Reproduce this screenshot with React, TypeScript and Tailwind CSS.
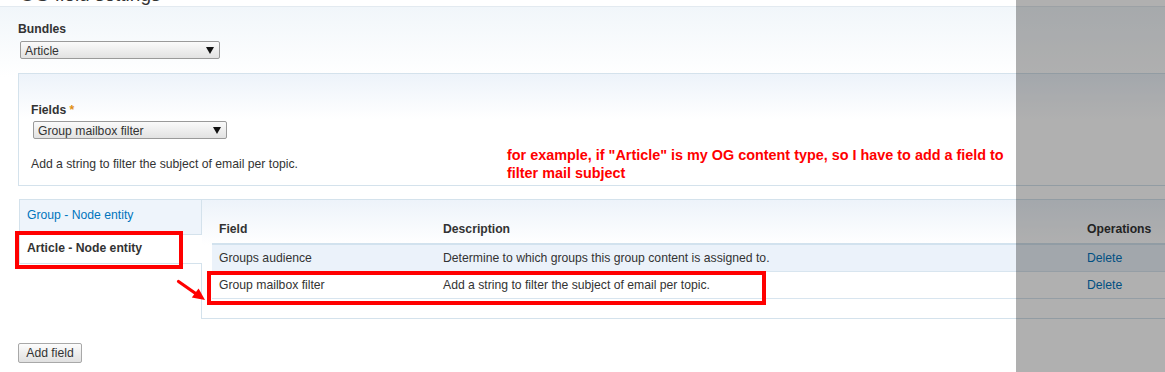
import React from "react";

function Caret() {
  return (
    <svg width="8" height="7" viewBox="0 0 8 7" className="shrink-0">
      <path d="M0 0 L8 0 L4 7 Z" fill="#111" />
    </svg>
  );
}

function Select({ value, className }: { value: string; className: string }) {
  return (
    <div
      className={
        "flex h-[18px] items-center justify-between rounded-[2px] border border-[#9a9a9a] bg-[linear-gradient(to_bottom,#fafafa,#e2e2e2)] pl-[4px] pr-[5px] pt-[1px] text-[12.2px] leading-[16px] text-[#333] " +
        className
      }
    >
      <span>{value}</span>
      <Caret />
    </div>
  );
}

export default function App() {
  return (
    <div className="relative h-[372px] w-[1165px] overflow-hidden bg-white font-['Liberation_Sans',Arial,sans-serif] text-[12.2px] leading-[15px] text-[#333]">
      <div className="w-[1220px]">
        <h1 className="-mt-[16px] h-[22px] pl-[20px] text-[19px] font-normal leading-[22px] text-[#333]">
          OG field settings
        </h1>
        <div className="border-t border-[#e3eaf0] bg-[linear-gradient(to_bottom,#f1f6fa,#ffffff_70px)] pl-[18px] pt-[15px]">
          <div className="font-bold">Bundles</div>
          <Select className="ml-[2px] mt-[4px] w-[200px]" value="Article" />

          <div className="mt-[14px] border-y border-l border-[#d4e2ec] bg-[linear-gradient(to_bottom,#edf3fa,#ffffff_45px)] pb-[13px] pl-[12px] pt-[29px]">
            <div className="font-bold">
              Fields <span className="text-[#e09010]">*</span>
            </div>
            <Select className="ml-[2px] mt-[3px] w-[194px]" value="Group mailbox filter" />
            <div className="mt-[18px]">Add a string to filter the subject of email per topic.</div>
          </div>

          <div className="ml-[1px] mt-[13px] flex">
            <div className="w-[182px] shrink-0">
              <div className="h-[36px] border-y border-l border-[#d4e2ec] bg-[#eef4fb] pl-[7px] pt-[8px] text-[#0074bd]">
                Group - Node entity
              </div>
              <div className="relative z-10 h-[29px] w-[183px] border-b border-l border-[#d4e2ec] bg-white pl-[7px] pt-[6px] font-bold">
                Article - Node entity
              </div>
            </div>
            <div className="flex-1 border border-[#d4e2ec] bg-[linear-gradient(to_bottom,#edf3fa,#ffffff_45px)] pb-[19px] pl-[10px] pt-[11px]">
              <table className="w-[1000px] table-fixed border-separate border-spacing-0">
                <colgroup>
                  <col className="w-[224px]" />
                  <col className="w-[644px]" />
                  <col />
                </colgroup>
                <thead>
                  <tr>
                    <th className="border-b-2 border-[#d2e2ee] pb-[6px] pl-[7px] pt-[11px] text-left font-bold">Field</th>
                    <th className="border-b-2 border-[#d2e2ee] pb-[6px] pl-[7px] pt-[11px] text-left font-bold">Description</th>
                    <th className="border-b-2 border-[#d2e2ee] pb-[6px] pl-[7px] pt-[11px] text-left font-bold">Operations</th>
                  </tr>
                </thead>
                <tbody>
                  <tr className="bg-[#ebf2fa]">
                    <td className="border-b border-[#d8e5ef] pb-[5px] pl-[7px] pt-[6px]">Groups audience</td>
                    <td className="border-b border-[#d8e5ef] pb-[5px] pl-[7px] pt-[6px]">
                      Determine to which groups this group content is assigned to.
                    </td>
                    <td className="border-b border-[#d8e5ef] pb-[5px] pl-[7px] pt-[6px] text-[#0074bd]">Delete</td>
                  </tr>
                  <tr className="bg-white">
                    <td className="border-b border-[#d8e5ef] pb-[5px] pl-[7px] pt-[6px]">Group mailbox filter</td>
                    <td className="border-b border-[#d8e5ef] pb-[5px] pl-[7px] pt-[6px]">
                      Add a string to filter the subject of email per topic.
                    </td>
                    <td className="border-b border-[#d8e5ef] pb-[5px] pl-[7px] pt-[6px] text-[#0074bd]">Delete</td>
                  </tr>
                </tbody>
              </table>
            </div>
          </div>

          <button className="mt-[24px] flex h-[20px] w-[64px] items-center justify-center rounded-[2px] border border-[#a8a8a8] bg-[linear-gradient(to_bottom,#fcfcfc,#e0e0e0)] text-[12.2px] leading-[15px] text-[#333]">
            Add field
          </button>
        </div>
      </div>

      {/* annotations */}
      <div className="absolute left-[507px] top-[146px] text-[14.4px] font-bold leading-[18px] text-[#ff0000]">
        for example, if "Article" is my OG content type, so I have to add a field to
        <br />
        filter mail subject
      </div>
      <div className="absolute left-[15px] top-[231px] z-20 h-[38px] w-[168px] border-4 border-[#ff0000]" />
      <div className="absolute left-[207px] top-[271px] z-20 h-[34px] w-[559px] border-4 border-[#ff0000]" />
      <svg className="absolute left-[170px] top-[272px] z-20" width="44" height="36" viewBox="170 272 44 36">
        <line x1="178.5" y1="281.5" x2="196" y2="293.8" stroke="#ff0000" strokeWidth="3.2" strokeLinecap="round" />
        <path d="M205 300 L191.8 297.6 L198.6 288.4 Z" fill="#ff0000" />
      </svg>

      {/* dim overlay */}
      <div className="absolute bottom-0 left-[1016px] right-0 top-0 z-30 bg-[rgba(0,0,0,0.31)]" />
    </div>
  );
}
